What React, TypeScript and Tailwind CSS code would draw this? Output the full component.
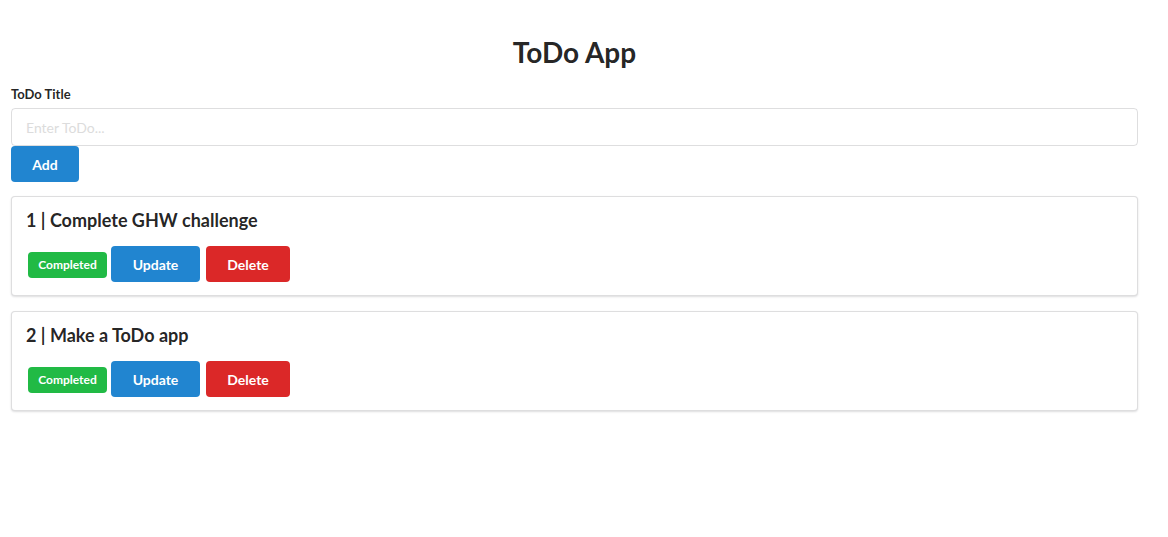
import { useState } from "react";

type Todo = { id: number; title: string; completed: boolean };

const initialTodos: Todo[] = [
  { id: 1, title: "Complete GHW challenge", completed: true },
  { id: 2, title: "Make a ToDo app", completed: true },
];

function TodoCard({ todo }: { todo: Todo }) {
  return (
    <div className="rounded-[4px] border border-[rgba(34,36,38,0.15)] bg-white px-[14px] pt-[12px] pb-[13px] shadow-[0_1px_2px_0_rgba(34,36,38,0.15)]">
      <h3 className="mb-[14px] text-[18px] font-bold leading-[23px]">
        {todo.id} | {todo.title}
      </h3>
      <div className="flex items-center">
        {todo.completed && (
          <span className="ml-[2px] mr-[4px] mt-[2px] flex h-[26px] w-[79px] items-center justify-center rounded-[4px] bg-[#21ba45] text-[12px] font-bold text-white">
            Completed
          </span>
        )}
        <button className="mr-[6px] h-[36px] w-[89px] rounded-[4px] bg-[#2185d0] text-[14px] font-bold text-white">
          Update
        </button>
        <button className="h-[36px] w-[84px] rounded-[4px] bg-[#db2828] text-[14px] font-bold text-white">
          Delete
        </button>
      </div>
    </div>
  );
}

export default function App() {
  const [todos] = useState<Todo[]>(initialTodos);
  const [text, setText] = useState("");

  return (
    <div className="min-h-[537px] bg-white font-['Lato',sans-serif] text-[rgba(0,0,0,0.87)]">
      <div className="ml-[11px] w-[1127px] pt-[34px]">
        <h1 className="text-center text-[28px] font-bold leading-[36px]">ToDo App</h1>

        {/* Add form */}
        <div className="mt-[16px]">
          <label className="mb-[5px] block text-[13px] font-bold leading-[17px]">ToDo Title</label>
          <input
            value={text}
            onChange={(e) => setText(e.target.value)}
            placeholder="Enter ToDo..."
            className="block h-[38px] w-full rounded-[4px] border border-[rgba(34,36,38,0.15)] px-[14px] text-[14px] outline-none placeholder:text-[#dcdcdc]"
          />
          <button className="h-[36px] w-[68px] rounded-[4px] bg-[#2185d0] text-[14px] font-bold text-white">
            Add
          </button>
        </div>

        {/* List */}
        <div className="mt-[14px] flex flex-col gap-[15px]">
          {todos.map((t) => (
            <TodoCard key={t.id} todo={t} />
          ))}
        </div>
      </div>
    </div>
  );
}
